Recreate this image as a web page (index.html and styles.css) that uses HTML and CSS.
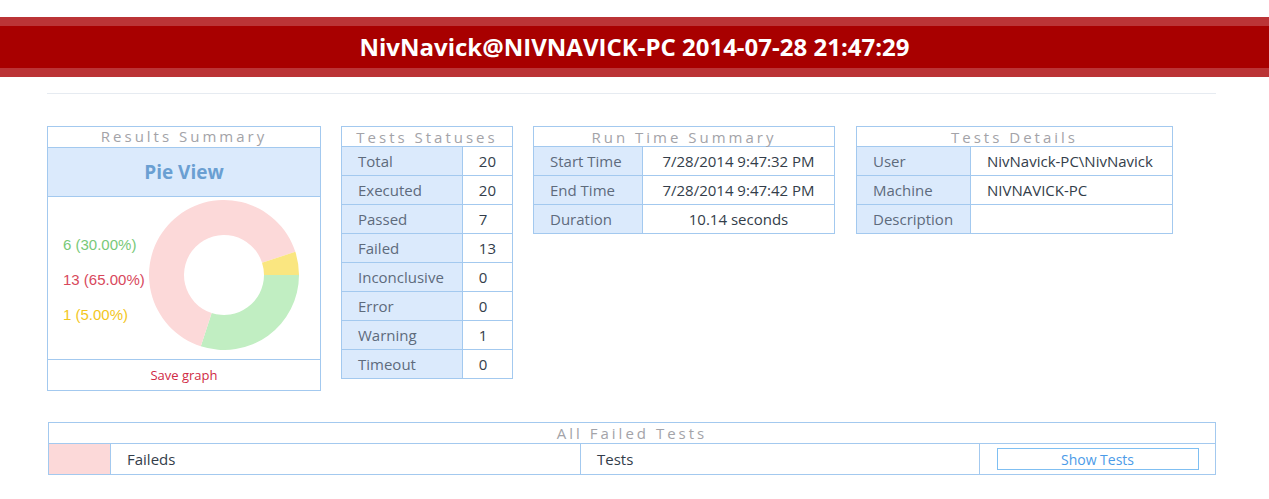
FILE: index.html
```html
<!DOCTYPE html>
<html lang="en">
<head>
    <meta charset="UTF-8">
    <meta name="viewport" content="width=device-width, initial-scale=1.0">
    <title>Test Results</title>
    <link rel="stylesheet" href="styles.css">
</head>
<body>
    <div class="header">
        <h1>NivNavick@NIVNAVICK-PC 2014-07-28 21:47:29</h1>
    </div>

    <div class="container">
        <hr class="divider">

        <div class="summary-row">
            <div class="box results-box">
                <div class="box-title">Results Summary</div>
                <div class="pie-title">Pie View</div>
                <div class="chart">
                    <div class="legend">
                        <div class="legend-passed">6 (30.00%)</div>
                        <div class="legend-failed">13 (65.00%)</div>
                        <div class="legend-warning">1 (5.00%)</div>
                    </div>
                    <svg class="donut" width="150" height="150" viewBox="0 0 150 150">
                        <!-- green 0..108deg, pink 108..342deg, yellow 342..360deg -->
                        <path d="M150 75 A75 75 0 0 1 51.82 146.33 L62.64 113.04 A40 40 0 0 0 115 75 Z" fill="#c1eec2"/>
                        <path d="M51.82 146.33 A75 75 0 1 1 146.33 51.82 L113.04 62.64 A40 40 0 1 0 62.64 113.04 Z" fill="#fcd9d9"/>
                        <path d="M146.33 51.82 A75 75 0 0 1 150 75 L115 75 A40 40 0 0 0 113.04 62.64 Z" fill="#fae680"/>
                    </svg>
                </div>
                <div class="save-graph">Save graph</div>
            </div>

            <table class="info-table statuses">
                <tr><th colspan="2" class="box-title">Tests Statuses</th></tr>
                <tr><td class="label">Total</td><td class="value">20</td></tr>
                <tr><td class="label">Executed</td><td class="value">20</td></tr>
                <tr><td class="label">Passed</td><td class="value">7</td></tr>
                <tr><td class="label">Failed</td><td class="value">13</td></tr>
                <tr><td class="label">Inconclusive</td><td class="value">0</td></tr>
                <tr><td class="label">Error</td><td class="value">0</td></tr>
                <tr><td class="label">Warning</td><td class="value">1</td></tr>
                <tr><td class="label">Timeout</td><td class="value">0</td></tr>
            </table>

            <table class="info-table runtime">
                <tr><th colspan="2" class="box-title">Run Time Summary</th></tr>
                <tr><td class="label">Start Time</td><td class="value center">7/28/2014 9:47:32 PM</td></tr>
                <tr><td class="label">End Time</td><td class="value center">7/28/2014 9:47:42 PM</td></tr>
                <tr><td class="label">Duration</td><td class="value center">10.14 seconds</td></tr>
            </table>

            <table class="info-table details">
                <tr><th colspan="2" class="box-title">Tests Details</th></tr>
                <tr><td class="label">User</td><td class="value">NivNavick-PC\NivNavick</td></tr>
                <tr><td class="label">Machine</td><td class="value">NIVNAVICK-PC</td></tr>
                <tr><td class="label">Description</td><td class="value"></td></tr>
            </table>
        </div>

        <table class="failed-table">
            <tr><th colspan="4" class="box-title">All Failed Tests</th></tr>
            <tr>
                <td class="swatch"></td>
                <td class="failed-name">Faileds</td>
                <td class="failed-tests">Tests</td>
                <td class="failed-action"><button class="show-btn">Show Tests</button></td>
            </tr>
        </table>
    </div>
</body>
</html>
```

FILE: styles.css
```css
body {
    font-family: "Open Sans", "DejaVu Sans", sans-serif;
    background-color: #ffffff;
    margin: 0;
    padding: 0;
    color: #333d4a;
}
.header {
    margin-top: 17px;
    background-color: #a80000;
    border-top: 9px solid #bb3436;
    border-bottom: 9px solid #bb3436;
    height: 42px;
}
h1 {
    margin: 0;
    color: #ffffff;
    text-align: center;
    font-size: 24px;
    line-height: 42px;
    font-weight: bold;
}
.container {
    padding: 0 53px 0 47px;
}
.divider {
    border: none;
    border-top: 1px solid #e6ebf1;
    margin: 16px 0 32px 0;
}
.summary-row {
    display: flex;
    align-items: flex-start;
    gap: 20px;
}
.box-title {
    color: #a3a3a8;
    font-size: 15px;
    font-weight: normal;
    letter-spacing: 3px;
    text-align: center;
    height: 20px;
    line-height: 18px;
    padding: 0;
}
th.box-title {
    height: 19px;
}
.box {
    border: 1px solid #a3c9ef;
}
.results-box {
    width: 272px;
}
.pie-title {
    background-color: #dbeafc;
    border-top: 1px solid #a3c9ef;
    border-bottom: 1px solid #a3c9ef;
    color: #6a9fd2;
    font-size: 19px;
    font-weight: bold;
    text-align: center;
    height: 48px;
    line-height: 48px;
}
.chart {
    display: flex;
    align-items: flex-start;
    height: 162px;
    padding-left: 15px;
}
.legend {
    width: 86px;
    font-family: "Liberation Sans", Arial, sans-serif;
    font-size: 15px;
    margin-top: 30px;
}
.legend div {
    height: 35px;
    line-height: 35px;
}
.legend-passed {
    color: #78c978;
}
.legend-failed {
    color: #d8485c;
}
.legend-warning {
    color: #f3c61c;
}
.donut {
    display: block;
    margin-top: 3px;
}
.save-graph {
    border-top: 1px solid #a3c9ef;
    color: #d02a45;
    font-size: 13px;
    text-align: center;
    height: 30px;
    line-height: 30px;
}
.info-table {
    border-collapse: collapse;
    border: 1px solid #a3c9ef;
    font-size: 15px;
}
.info-table td {
    border: 1px solid #a3c9ef;
    height: 28px;
    padding: 0 16px;
}
.info-table th {
    border: 1px solid #a3c9ef;
}
.label {
    background-color: #dbeafc;
    color: #5e6b7c;
}
.value {
    color: #333d4a;
}
.center {
    text-align: center;
}
.statuses {
    width: 172px;
}
.statuses .label {
    width: 89px;
}
.runtime {
    width: 302px;
}
.runtime .label {
    width: 76px;
}
.details {
    margin-left: 1px;
    width: 317px;
}
.details .label {
    width: 81px;
}
.failed-table {
    margin-top: 31px;
    margin-left: 1px;
    width: 1168px;
    border-collapse: collapse;
    border: 1px solid #a3c9ef;
    font-size: 15px;
}
.failed-table th {
    border: 1px solid #a3c9ef;
}
.failed-table th.box-title {
    height: 20px;
}
.failed-table td {
    border: 1px solid #a3c9ef;
    height: 30px;
    padding: 0 16px;
}
.failed-table .swatch {
    background-color: #fcd9d9;
    width: 29px;
}
.failed-name {
    width: 437px;
}
.failed-tests {
    width: 366px;
}
.failed-action {
    text-align: center;
}
.show-btn {
    width: 202px;
    height: 22px;
    background-color: #ffffff;
    border: 1px solid #7fbff2;
    color: #4b9be8;
    font-family: "Open Sans", sans-serif;
    font-size: 14px;
    padding: 0;
    cursor: pointer;
}
```
